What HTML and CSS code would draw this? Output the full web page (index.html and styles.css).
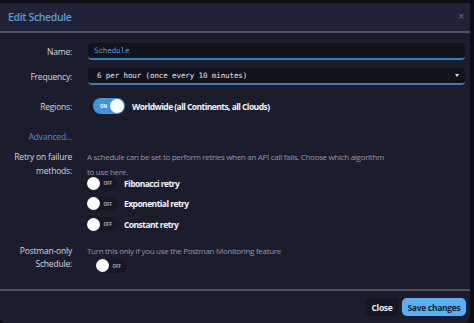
FILE: index.html
```html
<!DOCTYPE html>
<html lang="en">
<head>
    <meta charset="UTF-8">
    <title>Edit Schedule</title>
    <link rel="stylesheet" href="styles.css">
</head>
<body>
    <div class="modal">
        <div class="modal-header">
            <div class="modal-title">Edit Schedule</div>
            <button class="close-x">&times;</button>
        </div>
        <div class="modal-body">
            <div class="field">
                <label class="field-label">Name:</label>
                <div class="text-input name-input">Schedule</div>
            </div>
            <div class="field freq-field">
                <label class="field-label">Frequency:</label>
                <div class="text-input select-input">
                    <span>6 per hour (once every 10 minutes)</span>
                    <span class="caret"></span>
                </div>
            </div>
            <div class="field regions-field">
                <label class="field-label">Regions:</label>
                <div class="option regions-option">
                    <span class="toggle on"><span class="toggle-text">ON</span><span class="knob"></span></span>
                    <span class="option-label">Worldwide (all Continents, all Clouds)</span>
                </div>
            </div>
            <div class="field advanced-field">
                <a class="advanced-link">Advanced...</a>
            </div>
            <div class="field retry-field">
                <label class="field-label multi">Retry on failure<br>methods:</label>
                <div>
                    <p class="help retry-help">A schedule can be set to perform retries when an API call fails. Choose which algorithm to use here.</p>
                    <div class="option">
                        <span class="toggle"><span class="knob"></span><span class="toggle-text">OFF</span></span>
                        <span class="option-label">Fibonacci retry</span>
                    </div>
                    <div class="option">
                        <span class="toggle"><span class="knob"></span><span class="toggle-text">OFF</span></span>
                        <span class="option-label">Exponential retry</span>
                    </div>
                    <div class="option">
                        <span class="toggle"><span class="knob"></span><span class="toggle-text">OFF</span></span>
                        <span class="option-label">Constant retry</span>
                    </div>
                </div>
            </div>
            <div class="field postman-field">
                <label class="field-label multi">Postman-only<br>Schedule:</label>
                <div>
                    <p class="help">Turn this only if you use the Postman Monitoring feature</p>
                    <span class="toggle postman-toggle"><span class="knob"></span><span class="toggle-text">OFF</span></span>
                </div>
            </div>
        </div>
        <div class="modal-footer">
            <button class="btn btn-close">Close</button>
            <button class="btn btn-save">Save changes</button>
        </div>
    </div>
</body>
</html>
```

FILE: styles.css
```css
html, body {
    height: 100%;
}
body {
    margin: 0;
    background-color: #0c0d14;
    font-family: "Open Sans", "Noto Sans", sans-serif;
    overflow: hidden;
}
.modal {
    width: 470px;
    height: 320px;
    margin-top: 3px;
    background-color: #1b1d2c;
    border-radius: 0 0 6px 6px;
    display: flex;
    flex-direction: column;
}
.modal-header {
    height: 28px;
    display: flex;
    align-items: center;
    justify-content: space-between;
    padding: 0 6px 0 8px;
    background-color: #202337;
    border-bottom: 2px solid #4e5162;
}
.modal-title {
    color: #5b9fd8;
    font-size: 10.5px;
    font-weight: 600;
    letter-spacing: -0.35px;
}
.close-x {
    background: transparent;
    border: none;
    color: #6d7080;
    font-size: 10px;
    padding: 0;
    margin-top: -2px;
}
.modal-body {
    flex: 1 1 auto;
    padding: 10px 5px 0 0;
}
.field {
    display: grid;
    grid-template-columns: 72px 1fr;
    column-gap: 15px;
    align-items: center;
}
.field-label {
    text-align: right;
    color: #d6d7de;
    font-size: 8.5px;
    letter-spacing: -0.2px;
}
.field-label.multi {
    align-self: start;
    line-height: 13.5px;
    padding-top: 1px;
}
.text-input {
    height: 15px;
    margin-left: 1px;
    background-color: #11121c;
    border-radius: 4px;
    border-bottom: 2px solid #3a7bb2;
    display: flex;
    align-items: center;
    font-family: "DejaVu Sans Mono", monospace;
    font-size: 7.5px;
    letter-spacing: -0.1px;
}
.name-input {
    color: #5b9fd8;
    padding-left: 6px;
}
.freq-field {
    margin-top: 8px;
}
.select-input {
    color: #e6e7ec;
    padding: 0 6px 0 9px;
    justify-content: space-between;
}
.caret {
    width: 0;
    height: 0;
    border-left: 2.5px solid transparent;
    border-right: 2.5px solid transparent;
    border-top: 3px solid #e6e7ec;
}
.regions-field {
    margin-top: 13px;
}
.option {
    display: flex;
    align-items: center;
    height: 20.5px;
}
.regions-option {
    margin-left: 6px;
    height: 16px;
}
.option-label {
    color: #f3f3f6;
    font-size: 8.5px;
    font-weight: 700;
    letter-spacing: -0.55px;
    margin-left: 7px;
}
.toggle {
    width: 30px;
    height: 14px;
    border-radius: 7px;
    background-color: #151723;
    display: flex;
    align-items: center;
    justify-content: space-between;
    padding: 0 5px 0 0;
    box-sizing: border-box;
}
.toggle.on {
    width: 32px;
    height: 16px;
    border-radius: 8px;
    background-color: #3d95e2;
    padding: 0 1px 0 7px;
}
.knob {
    width: 13px;
    height: 13px;
    border-radius: 50%;
    background-color: #ffffff;
}
.toggle.on .knob {
    width: 14px;
    height: 14px;
}
.toggle-text {
    color: #a9abb8;
    font-size: 4.5px;
    font-weight: 700;
}
.toggle.on .toggle-text {
    color: #ffffff;
}
.advanced-field {
    margin-top: 15px;
    height: 14px;
}
.advanced-link {
    text-align: right;
    color: #4c8fcf;
    font-size: 8.5px;
    letter-spacing: -0.2px;
    cursor: pointer;
}
.retry-field {
    margin-top: 6px;
}
.help {
    margin: 0;
    color: #9496a6;
    font-size: 8px;
    line-height: 15px;
    letter-spacing: -0.3px;
}
.retry-help {
    max-width: 300px;
    margin-bottom: -6px;
}
.postman-field {
    margin-top: 8px;
}
.postman-toggle {
    margin-left: 9px;
    margin-top: 1px;
}
.modal-footer {
    height: 32px;
    border-top: 2px solid #4e5162;
    display: flex;
    align-items: center;
    justify-content: flex-end;
    padding-right: 4px;
}
.btn {
    height: 18px;
    padding: 0;
    border: none;
    border-radius: 5px;
    font-family: "Open Sans", sans-serif;
    font-size: 8.5px;
    font-weight: 700;
    letter-spacing: -0.3px;
    white-space: nowrap;
    cursor: pointer;
}
.btn-close {
    width: 34px;
    background-color: #141621;
    color: #eeeef2;
    margin-right: 3px;
}
.btn-save {
    width: 64px;
    background-color: #58b1f3;
    color: #12223a;
}
```
